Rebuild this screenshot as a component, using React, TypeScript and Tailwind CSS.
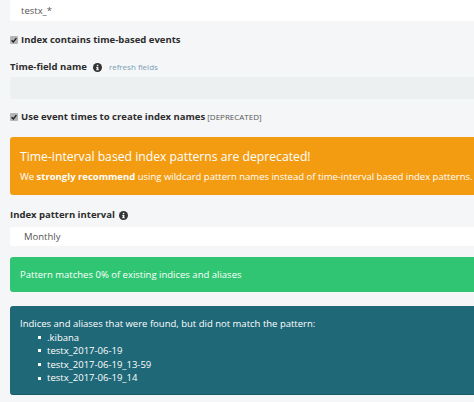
const indices = [".kibana", "testx_2017-06-19", "testx_2017-06-19_13-59", "testx_2017-06-19_14"];

function InfoDot() {
  return (
    <svg viewBox="0 0 16 16" className="h-[9px] w-[9px] shrink-0">
      <circle cx="8" cy="8" r="8" fill="#333333" />
      <rect x="6.6" y="7" width="2.8" height="5.5" fill="#f5f6f8" />
      <rect x="5.6" y="7" width="3.8" height="1.4" fill="#f5f6f8" />
      <rect x="5.6" y="11.4" width="4.8" height="1.4" fill="#f5f6f8" />
      <rect x="6.8" y="3.2" width="2.6" height="2.4" fill="#f5f6f8" />
    </svg>
  );
}

function Check() {
  return (
    <span className="flex h-[8px] w-[8px] shrink-0 items-center justify-center rounded-[1px] bg-[#b5b5b5]">
      <svg viewBox="0 0 10 10" className="h-[8px] w-[8px]">
        <path d="M2 5.2 4.2 7.4 8 2.6" fill="none" stroke="#222222" strokeWidth="1.8" />
      </svg>
    </span>
  );
}

export default function App() {
  return (
    <div className="h-[402px] w-[474px] overflow-hidden bg-[#f5f6f8] pl-[10px] font-['Open_Sans',sans-serif] text-[#2d2d2d]">
      <div className="-mr-[10px] flex h-[21px] items-center bg-white pl-[11px] pt-[2px] text-[9.5px] text-[#555555]">testx_*</div>

      <label className="mt-[11px] flex h-[16px] items-center gap-[3px] text-[9.5px] font-bold">
        <Check />
        <span>Index contains time-based events</span>
      </label>

      <div className="mt-[11px] flex h-[16px] items-center text-[9.5px] font-bold">
        <span>Time-field name</span>
        <span className="ml-[6px]"><InfoDot /></span>
        <span className="ml-[7px] text-[8px] font-normal text-[#7a9db5]">refresh fields</span>
      </div>

      <div className="-mr-[10px] mt-[2px] h-[22px] rounded-l-[2px] bg-[#ecf0f1]" />

      <label className="mt-[10px] flex h-[16px] items-center gap-[3px] text-[9.5px] font-bold">
        <Check />
        <span>Use event times to create index names</span>
        <span className="ml-[-1px] text-[8px] font-normal text-[#555555]">[DEPRECATED]</span>
      </label>

      <div className="-mr-[10px] mt-[12px] h-[58px] rounded-l-[3px] bg-[#f39c12] pl-[10px] pt-[10px] text-white">
        <div className="text-[12.2px] leading-[20px]">Time-interval based index patterns are deprecated!</div>
        <p className="whitespace-nowrap text-[9.5px] leading-[20px]">
          We <strong>strongly recommend</strong> using wildcard pattern names instead of time-interval based index patterns.
        </p>
      </div>

      <div className="mt-[12px] flex h-[16px] items-center gap-[4px] text-[9.5px] font-bold">
        <span>Index pattern interval</span>
        <InfoDot />
      </div>

      <div className="-mr-[10px] mt-[4px] flex h-[19px] items-center rounded-l-[2px] bg-white pl-[14px] pt-[2px] text-[9.5px] text-[#555555]">Monthly</div>

      <div className="-mr-[10px] mt-[11px] flex h-[35px] items-center rounded-l-[3px] bg-[#30c572] pl-[10px] pt-[2px] text-[9.5px] text-white">
        Pattern matches 0% of existing indices and aliases
      </div>

      <div className="-mr-[10px] mt-[14px] h-[89px] rounded-l-[3px] border-b border-[#1a5a68] bg-[#1f6878] pl-[10px] pt-[11px] text-[9.5px] leading-[13.6px] text-white">
        <div>Indices and aliases that were found, but did not match the pattern:</div>
        <ul className="list-none pl-[18px]">
          {indices.map((name) => (
            <li key={name} className="flex items-center gap-[6px]">
              <span className="h-[3px] w-[3px] bg-white" />
              {name}
            </li>
          ))}
        </ul>
      </div>
    </div>
  );
}
